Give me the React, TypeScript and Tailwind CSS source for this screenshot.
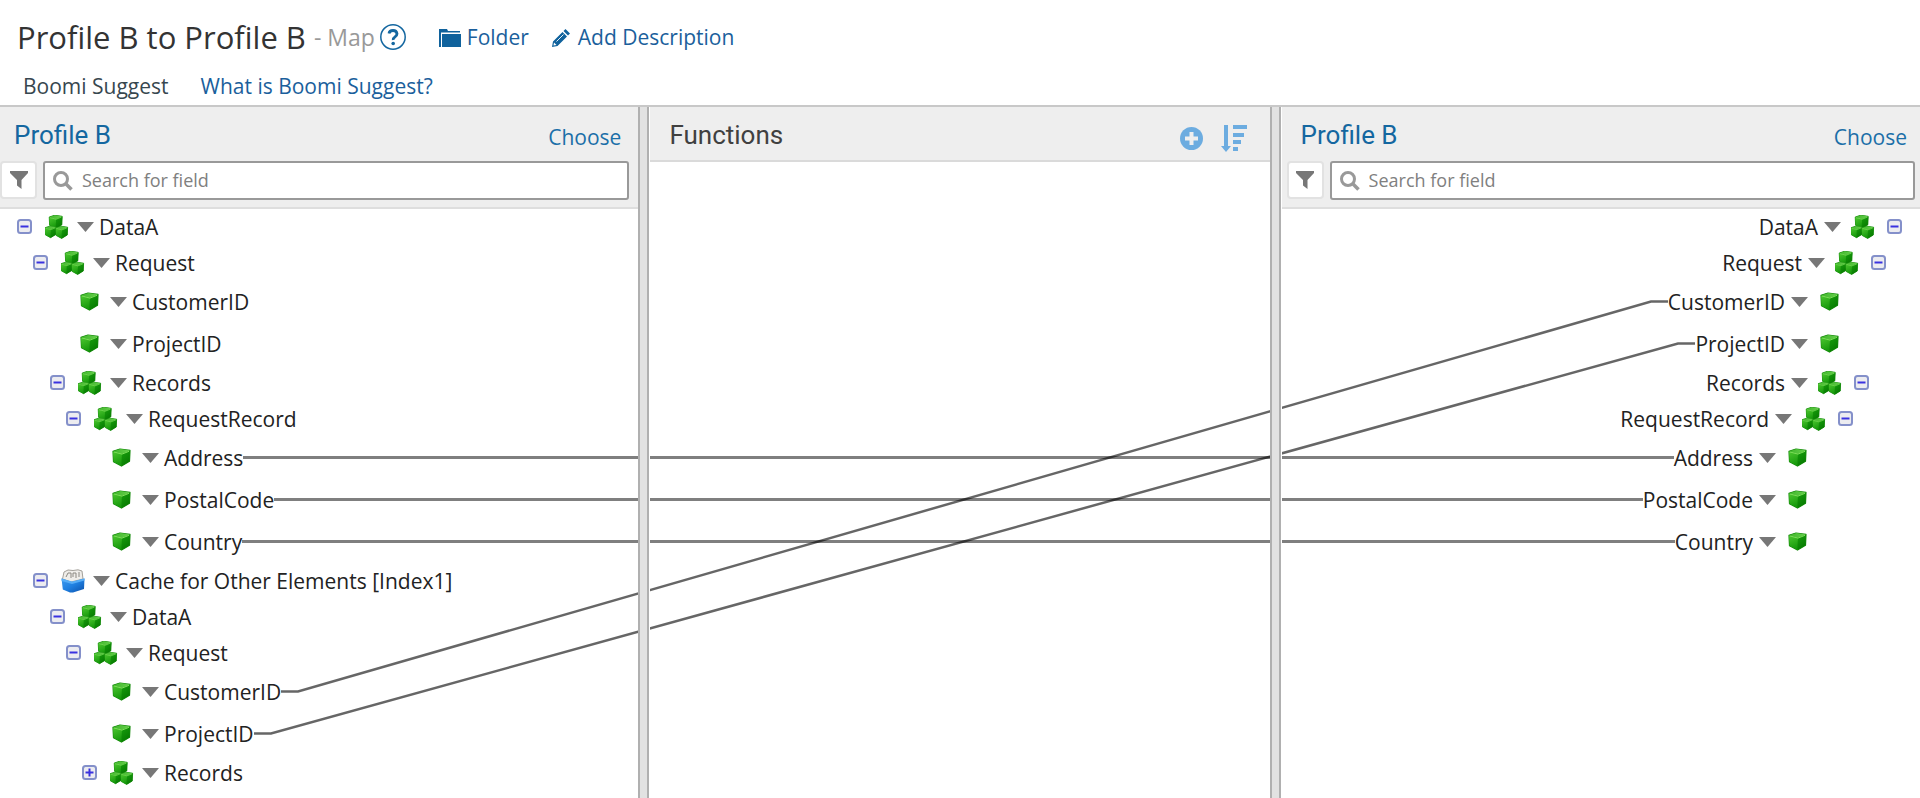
import { useLayoutEffect, useRef, useState } from "react";

type Kind = "group" | "leaf" | "cache";

interface TreeNode {
  id: string;
  label: string;
  depth: number;
  kind: Kind;
  open?: boolean;
}

interface Line {
  d: string;
  straight: boolean;
}

const sourceNodes: TreeNode[] = [
  { id: "s-data", label: "DataA", depth: 0, kind: "group", open: true },
  { id: "s-request", label: "Request", depth: 1, kind: "group", open: true },
  { id: "s-customer", label: "CustomerID", depth: 2, kind: "leaf" },
  { id: "s-project", label: "ProjectID", depth: 2, kind: "leaf" },
  { id: "s-records", label: "Records", depth: 2, kind: "group", open: true },
  { id: "s-record", label: "RequestRecord", depth: 3, kind: "group", open: true },
  { id: "s-address", label: "Address", depth: 4, kind: "leaf" },
  { id: "s-postal", label: "PostalCode", depth: 4, kind: "leaf" },
  { id: "s-country", label: "Country", depth: 4, kind: "leaf" },
  { id: "s-cache", label: "Cache for Other Elements [Index1]", depth: 1, kind: "cache", open: true },
  { id: "c-data", label: "DataA", depth: 2, kind: "group", open: true },
  { id: "c-request", label: "Request", depth: 3, kind: "group", open: true },
  { id: "c-customer", label: "CustomerID", depth: 4, kind: "leaf" },
  { id: "c-project", label: "ProjectID", depth: 4, kind: "leaf" },
  { id: "c-records", label: "Records", depth: 4, kind: "group", open: false },
];

const targetNodes: TreeNode[] = [
  { id: "t-data", label: "DataA", depth: 0, kind: "group", open: true },
  { id: "t-request", label: "Request", depth: 1, kind: "group", open: true },
  { id: "t-customer", label: "CustomerID", depth: 2, kind: "leaf" },
  { id: "t-project", label: "ProjectID", depth: 2, kind: "leaf" },
  { id: "t-records", label: "Records", depth: 2, kind: "group", open: true },
  { id: "t-record", label: "RequestRecord", depth: 3, kind: "group", open: true },
  { id: "t-address", label: "Address", depth: 4, kind: "leaf" },
  { id: "t-postal", label: "PostalCode", depth: 4, kind: "leaf" },
  { id: "t-country", label: "Country", depth: 4, kind: "leaf" },
];

const mappings = [
  ["s-address", "t-address"],
  ["s-postal", "t-postal"],
  ["s-country", "t-country"],
  ["c-customer", "t-customer"],
  ["c-project", "t-project"],
];

// gradients shared by every cube on the page
function IconDefs() {
  return (
    <svg width="0" height="0" className="absolute" aria-hidden="true">
      <defs>
        <linearGradient id="cube-left" x1="0" y1="0" x2="0.3" y2="1">
          <stop offset="0" stopColor="#4cc62f" />
          <stop offset="1" stopColor="#179a0c" />
        </linearGradient>
        <linearGradient id="cube-right" x1="0" y1="0" x2="0.5" y2="1">
          <stop offset="0" stopColor="#18a00d" />
          <stop offset="1" stopColor="#077a01" />
        </linearGradient>
        <linearGradient id="cube-top" x1="0" y1="0" x2="1" y2="0">
          <stop offset="0" stopColor="#3fb52a" />
          <stop offset="1" stopColor="#66cf4c" />
        </linearGradient>
        <linearGradient id="cache-body" x1="0" y1="0" x2="1" y2="1">
          <stop offset="0" stopColor="#3d9bf0" />
          <stop offset="0.5" stopColor="#1f7fe0" />
          <stop offset="1" stopColor="#0b50aa" />
        </linearGradient>
      </defs>
    </svg>
  );
}

function Cube({ x, y, sx, sy }: { x: number; y: number; sx: number; sy: number }) {
  return (
    <g transform={`translate(${x} ${y}) scale(${sx} ${sy})`} strokeLinejoin="round">
      <path d="M1 3.500 8 1 18 2.500 17.500 14 9.500 19 1.500 14.500Z" fill="#148a0a" stroke="#148a0a" strokeWidth="1.200" />
      <path d="M1 3.500 8.500 1 18 2.500 10 6Z" fill="url(#cube-top)" />
      <path d="M1 3.800 10 6.300 9.500 19 1.500 14.500Z" fill="url(#cube-left)" />
      <path d="M10 6.300 18 3 17.500 14 9.500 19Z" fill="url(#cube-right)" />
      <path d="M2 4.200 10 6.400 17 3.500" fill="none" stroke="#7fe05c" strokeWidth="1" />
    </g>
  );
}

function NodeIcon({ kind }: { kind: Kind }) {
  if (kind === "leaf") {
    return (
      <svg width="24" height="24" viewBox="0 0 24 24" className="shrink-0">
        <Cube x={2} y={2} sx={1} sy={0.95} />
      </svg>
    );
  }
  if (kind === "cache") {
    return (
      <svg width="24" height="24" viewBox="0 0 24 24" className="shrink-0">
        <path d="M1.500 10 3 3 7 1 12 1.500 17 0.800 21 2 22 10 10 13Z" fill="#efede9" stroke="#a3a09a" strokeWidth="1" />
        <path d="M5 8 7 4h3v5M12 8V4h3v5M18 8V3" stroke="#8b8882" strokeWidth="1" fill="none" />
        <path d="M0.500 9.500 11 13 23.500 9.500 23 20 12 23.500 9 23.500 1.800 20.500Z" fill="url(#cache-body)" strokeLinejoin="round" />
        <path d="M0.500 9.500 11 12.500 23.500 9.500V11.500L11 15 0.700 12Z" fill="#56adf7" />
      </svg>
    );
  }
  return (
    <svg width="24" height="24" viewBox="0 0 24 24" className="shrink-0">
      <Cube x={3.500} y={-0.500} sx={0.76} sy={0.74} />
      <Cube x={-0.700} y={10.500} sx={0.66} sy={0.64} />
      <Cube x={10} y={10.500} sx={0.7} sy={0.68} />
    </svg>
  );
}

function Toggle({ open, label }: { open: boolean; label: string }) {
  return (
    <button type="button" aria-label={`Toggle ${label}`} aria-expanded={open} className="size-4 shrink-0">
      <svg width="16" height="16" viewBox="0 0 16 16">
        <rect x="1" y="1" width="13" height="13" rx="2.500" fill="#ececf0" stroke="#8490ca" strokeWidth="2" />
        <path d={open ? "M3.500 7.500h8" : "M3.500 7.500h8M7.500 3.500v8"} stroke="#3a32e0" strokeWidth="2" />
      </svg>
    </button>
  );
}

function TreeRow({ node, mirrored }: { node: TreeNode; mirrored: boolean }) {
  const indent = Math.round(17 + node.depth * 16.3);
  return (
    <li
      className={`flex items-center ${mirrored ? "flex-row-reverse" : ""} ${node.kind === "leaf" ? "h-[42px]" : "h-9"}`}
      style={mirrored ? { paddingRight: indent } : { paddingLeft: indent }}
    >
      {node.kind === "leaf" ? <span className="w-4 shrink-0" /> : <Toggle open={!!node.open} label={node.label} />}
      <span className={mirrored ? "mr-3" : "ml-3"}>
        <NodeIcon kind={node.kind} />
      </span>
      <button type="button" aria-label={`${node.label} menu`} className={mirrored ? "mr-2.5" : "ml-2"}>
        <svg width="17" height="10" viewBox="0 0 17 10">
          <path d="M0 0h17L8.500 10Z" fill="#777" />
        </svg>
      </button>
      <span data-node={node.id} className={`whitespace-nowrap ${mirrored ? "mr-1.5" : "ml-[5px]"}`}>
        {node.label}
      </span>
    </li>
  );
}

function ProfilePanel({ side, nodes }: { side: "source" | "target"; nodes: TreeNode[] }) {
  const mirrored = side === "target";
  return (
    <section className="w-[33.25%] shrink-0">
      <div className={`border-b-2 border-[#dedede] bg-[#eee] ${mirrored ? "px-[5px]" : "pr-[9px]"}`}>
        <div className="flex h-[54px] items-center justify-between pl-[14px] pr-2 pt-0.5">
          <h2 className="font-[Roboto,sans-serif] text-[26px] leading-8 text-[#1467a0]">Profile B</h2>
          <button type="button" className="pt-1.5 text-[21px] text-[#1b6fa8]">
            Choose
          </button>
        </div>
        <div className="flex gap-1.5 pb-[7px]">
          <button
            type="button"
            aria-label="Filter fields"
            className="flex h-[38px] w-[37px] items-center justify-center rounded border-2 border-[#e2e2e2] bg-white"
          >
            <svg width="18" height="18" viewBox="0 0 18 18">
              <path d="M0 0h18v2L11.500 9v9L7 14.500V9L0 2Z" fill="#777" />
            </svg>
          </button>
          <label className="flex h-[39px] flex-1 items-center gap-[9px] rounded-[3px] border-2 border-[#999] bg-white pl-2">
            <svg width="20" height="20" viewBox="0 0 20 20">
              <circle cx="8" cy="8" r="6.500" fill="none" stroke="#999" strokeWidth="3" />
              <path d="m12.800 12.800 5.700 5.700" stroke="#999" strokeWidth="3.500" />
            </svg>
            <input
              type="text"
              aria-label="Search for field"
              placeholder="Search for field"
              className="min-w-0 flex-1 text-[18px] outline-none placeholder:text-[#808080]"
            />
          </label>
        </div>
      </div>
      <ul className="text-[21px] leading-7 text-[#222]">
        {nodes.map((node) => (
          <TreeRow key={node.id} node={node} mirrored={mirrored} />
        ))}
      </ul>
    </section>
  );
}

function Divider() {
  return (
    <div className="z-10 flex shrink-0 bg-white pr-px">
      <div className="w-[11px] cursor-col-resize border-x-2 border-[#b0b0b0] bg-[#e2e2e2]" />
    </div>
  );
}

export default function App() {
  const canvasRef = useRef<HTMLDivElement>(null);
  const [lines, setLines] = useState<Line[]>([]);

  useLayoutEffect(() => {
    const canvas = canvasRef.current;
    if (!canvas) return;

    const measure = () => {
      const base = canvas.getBoundingClientRect();
      const box = (id: string) => canvas.querySelector(`[data-node="${id}"]`)!.getBoundingClientRect();
      setLines(
        mappings.map(([from, to]) => {
          const a = box(from);
          const b = box(to);
          const x1 = Math.round(a.right - base.left);
          const y1 = Math.round(a.top + a.height / 2 - base.top) - 0.5;
          const x2 = Math.round(b.left - base.left);
          const y2 = Math.round(b.top + b.height / 2 - base.top) - 0.5;
          return { d: `M${x1} ${y1}H${x1 + 17}L${x2 - 17} ${y2}H${x2}`, straight: y1 === y2 };
        })
      );
    };

    measure();
    const observer = new ResizeObserver(measure);
    observer.observe(canvas);
    return () => observer.disconnect();
  }, []);

  return (
    <div className="flex h-screen flex-col overflow-hidden bg-white font-['Open_Sans',sans-serif] text-[21px]">
      <IconDefs />
      <header className="border-b-2 border-[#c8c8c8] px-[17px] pb-[3px] pt-[15px]">
        <div className="flex h-11 items-center">
          <h1 className="text-[31px] text-[#333]">Profile B to Profile B</h1>
          <span className="ml-2 text-[23px] text-[#999]">- Map</span>
          <a href="#help" aria-label="Help" className="ml-[5px]">
            <svg width="26" height="26" viewBox="0 0 26 26">
              <circle cx="13" cy="13" r="12.200" fill="none" stroke="#1467a0" strokeWidth="1.500" />
              <path d="M9 9.500Q9.500 6.500 13 6.500T17 9.700Q17 11.500 15 12.800T13.200 16" fill="none" stroke="#1467a0" strokeWidth="2.800" />
              <circle cx="13.200" cy="19.500" r="1.800" fill="#1467a0" />
            </svg>
          </a>
          <button type="button" className="ml-[33px] flex items-center gap-1.5 pt-0.5 text-[#1b5f9c]">
            <svg width="22" height="18" viewBox="0 0 22 18">
              <path d="M0 0h8l1 2h12v1.500H2V18H0Z" fill="#10629c" />
              <path d="M3 5h19v13H3Z" fill="#10629c" />
            </svg>
            Folder
          </button>
          <button type="button" className="ml-[23px] flex items-center gap-2 pt-0.5 text-[#1b5f9c]">
            <svg width="18" height="18" viewBox="0 0 18 18">
              <path d="M13.500 0 18 4.500 16 6.500 11.500 2ZM10.500 3 15 7.500 5.500 17 0 18 1 12.500Z" fill="#10629c" />
              <path d="M4.500 12.500 11.500 5.500" stroke="#fff" strokeWidth="0.900" />
              <path d="M2 13.500 4.500 16 1.500 16.500Z" fill="#fff" />
            </svg>
            Add Description
          </button>
        </div>
        <div className="flex h-[43px] items-center gap-8 pl-1.5 pt-[13px]">
          <span className="text-[#37474f]">Boomi Suggest</span>
          <a href="#suggest" className="text-[#1b5f9c]">
            What is Boomi Suggest?
          </a>
        </div>
      </header>

      <main ref={canvasRef} className="relative flex min-h-0 flex-1">
        <ProfilePanel side="source" nodes={sourceNodes} />
        <Divider />
        <section className="min-w-0 flex-1">
          <div className="flex h-[55px] items-center justify-between border-b-2 border-[#dadada] bg-[#eee] pl-[19px] pr-[23px]">
            <h2 className="pt-[3px] font-[Roboto,sans-serif] text-[26px] leading-8 text-[#404040]">Functions</h2>
            <div className="flex items-center gap-[18px] pt-2.5">
              <button type="button" aria-label="Add function">
                <svg width="23" height="23" viewBox="0 0 23 23" className="block">
                  <circle cx="11.500" cy="11.500" r="11.500" fill="#6cace0" />
                  <path d="M11.500 5v13M5 11.500h13" stroke="#eee" strokeWidth="4" />
                </svg>
              </button>
              <button type="button" aria-label="Sort functions">
                <svg width="26" height="27" viewBox="0 0 26 27" fill="#6cace0">
                  <path d="M3 0h4v21h3l-5 6-5-6h3ZM12 0h14v4H12ZM12 8h11v4H12ZM12 15h8v4H12ZM12 22h5v4h-5Z" />
                </svg>
              </button>
            </div>
          </div>
        </section>
        <Divider />
        <ProfilePanel side="target" nodes={targetNodes} />

        <svg className="pointer-events-none absolute inset-0 h-full w-full">
          {lines.map((line) => (
            <path
              key={line.d}
              d={line.d}
              fill="none"
              stroke="#000"
              strokeOpacity={line.straight ? 0.5 : 0.6}
              strokeWidth={line.straight ? 3 : 2.5}
            />
          ))}
        </svg>
      </main>
    </div>
  );
}
